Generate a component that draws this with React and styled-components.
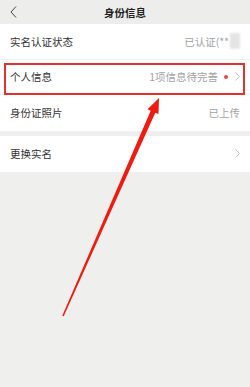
import React from "react";
import styled, { createGlobalStyle } from "styled-components";

const GlobalStyle = createGlobalStyle`
  html, body {
    margin: 0;
    padding: 0;
    background: #efefed;
  }
  * {
    box-sizing: border-box;
  }
`;

const Page = styled.div`
  position: relative;
  width: 250px;
  height: 387px;
  overflow: hidden;
  background: #efefed;
  font-family: "Noto Sans CJK SC", "Noto Sans", sans-serif;
`;

const Header = styled.div`
  position: relative;
  height: 24px;
  display: flex;
  align-items: center;
  justify-content: center;
  background: #ededeb;
  h1 {
    margin: 0;
    font-size: 10.5px;
    font-weight: 700;
    color: #222;
  }
`;

const Back = styled.span`
  position: absolute;
  left: 10px;
  top: 6px;
  display: flex;
`;

const Group = styled.div`
  background: #fff;
  margin-bottom: ${(props) => (props.gap ? "5.5px" : "0")};
`;

const Row = styled.div`
  position: relative;
  height: 35.5px;
  display: flex;
  align-items: center;
  justify-content: space-between;
  padding: 0 10px;
  border-bottom: ${(props) => (props.divider ? "1px solid #f1f1f1" : "none")};
`;

const Label = styled.span`
  font-size: 10.5px;
  color: #333;
`;

const Value = styled.span`
  display: flex;
  align-items: center;
  font-size: 10.5px;
  color: #a3a3a3;
`;

const Blur = styled.span`
  display: inline-block;
  width: 10px;
  height: 16px;
  margin-left: 1px;
  background: #e4e4e4;
  filter: blur(1px);
`;

const Dot = styled.span`
  width: 4px;
  height: 4px;
  border-radius: 50%;
  background: #e84545;
  margin: 0 7px 0 6px;
`;

// red annotation frame drawn over the row
const Highlight = styled.div`
  position: absolute;
  left: 4px;
  right: 5px;
  top: 3.5px;
  bottom: -1px;
  border: 2px solid #e8302a;
  pointer-events: none;
`;

const Arrow = styled.svg`
  position: absolute;
  left: 0;
  top: 0;
  pointer-events: none;
`;

const Chevron = () => (
  <svg width="5" height="9" viewBox="0 0 5 9">
    <polyline points="0.5,0.5 4.5,4.5 0.5,8.5" fill="none" stroke="#b5b5b5" strokeWidth="0.9" />
  </svg>
);

const App = () => {
  return (
    <Page>
      <GlobalStyle />
      <Header>
        <Back>
          <svg width="7" height="12" viewBox="0 0 7 12">
            <polyline points="6,0.5 1,6 6,11.5" fill="none" stroke="#444" strokeWidth="1" />
          </svg>
        </Back>
        <h1>身份信息</h1>
      </Header>
      <Group gap>
        <Row divider>
          <Label>实名认证状态</Label>
          <Value>
            已认证(**
            <Blur />
          </Value>
        </Row>
        <Row divider>
          <Label>个人信息</Label>
          <Value>
            1项信息待完善
            <Dot />
            <Chevron />
          </Value>
          <Highlight />
        </Row>
        <Row>
          <Label>身份证照片</Label>
          <Value>已上传</Value>
        </Row>
      </Group>
      <Group>
        <Row>
          <Label>更换实名</Label>
          <Value>
            <Chevron />
          </Value>
        </Row>
      </Group>
      <Arrow width="250" height="387" viewBox="0 0 250 387">
        <polygon
          points="62.3,315.7 150.7,110.7 147.5,109.3 159,98 158.5,114.1 155.3,112.7 63.7,316.3"
          fill="#f01b10"
        />
      </Arrow>
    </Page>
  );
};

export default App;
